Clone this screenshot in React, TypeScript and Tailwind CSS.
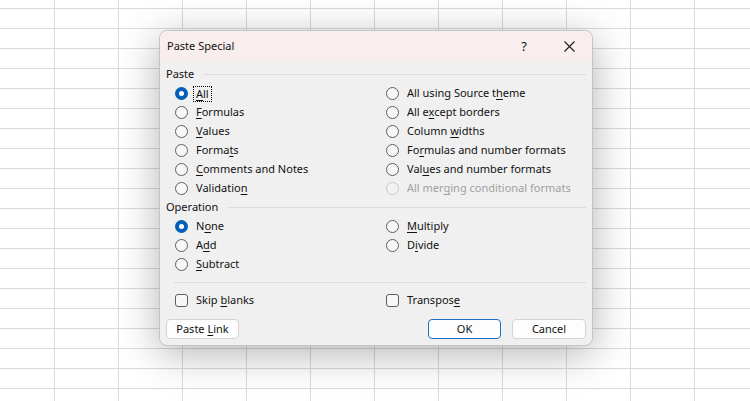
import React from "react";

type Parts = [string, string, string];

function Label({ p, focus }: { p: Parts; focus?: boolean }) {
  const inner = (
    <>
      {p[0]}
      <span className="underline underline-offset-[2px] decoration-[1px]">{p[1]}</span>
      {p[2]}
    </>
  );
  if (focus) {
    return (
      <span className="-ml-[3px] border border-dotted border-black px-[2px] leading-[14px]">{inner}</span>
    );
  }
  return <span>{inner}</span>;
}

function Radio({ p, checked, disabled, focus }: { p: Parts; checked?: boolean; disabled?: boolean; focus?: boolean }) {
  return (
    <div className={"flex h-[19px] items-center gap-2 " + (disabled ? "text-[#a0a0a0]" : "text-[#111111]")}>
      {checked ? (
        <span className="flex h-[13px] w-[13px] shrink-0 items-center justify-center rounded-full bg-[#005fb8]">
          <span className="h-[5px] w-[5px] rounded-full bg-white" />
        </span>
      ) : (
        <span
          className={
            "h-[13px] w-[13px] shrink-0 rounded-full border " +
            (disabled ? "border-[#c8c8c8] bg-[#f3f3f3]" : "border-[#5f5f5f] bg-[#f7f7f7]")
          }
        />
      )}
      <Label p={p} focus={focus} />
    </div>
  );
}

function Check({ p }: { p: Parts }) {
  return (
    <div className="flex h-[19px] items-center gap-2 text-[#111111]">
      <span className="h-[13px] w-[13px] shrink-0 rounded-[3px] border border-[#5f5f5f] bg-[#f7f7f7]" />
      <Label p={p} />
    </div>
  );
}

function Header({ title, lineMl }: { title: string; lineMl: string }) {
  return (
    <div className="flex h-[19px] items-center text-[#111111]">
      <span>{title}</span>
      <span className={"h-px flex-1 bg-[#dcdcdc] " + lineMl} />
    </div>
  );
}

function Btn({ p, w, primary }: { p: Parts; w: string; primary?: boolean }) {
  return (
    <div
      className={
        "flex h-[20px] items-center justify-center rounded-[4px] border bg-[#fdfdfd] text-[#111111] " +
        w +
        " " +
        (primary ? "border-[#1f6fc0]" : "border-[#d3d3d3]")
      }
    >
      <Label p={p} />
    </div>
  );
}

export default function App() {
  return (
    <div className="h-[401px] w-[750px] overflow-hidden bg-white bg-[linear-gradient(to_right,#dadada_1px,transparent_1px),linear-gradient(to_bottom,#dadada_1px,transparent_1px)] bg-[size:64px_20px] bg-[position:54px_8px] pl-[159px] pt-[30px] font-['Noto_Sans',sans-serif] text-[11px]">
      <div className="flex h-[316px] w-[434px] flex-col overflow-hidden rounded-[8px] border border-[#c4c4c4] bg-[#f0f0f0] shadow-[0_8px_40px_rgba(0,0,0,0.3)]">
        {/* Title bar */}
        <div className="flex h-[30px] shrink-0 items-center bg-[#f9eeee] pl-[7px] pr-[17px] text-[#111111]">
          <span className="flex-1 pt-[1px]">Paste Special</span>
          <span className="mr-[37px] text-[13px] leading-none">?</span>
          <svg width="11" height="11" viewBox="0 0 11 11" className="mt-[1px]">
            <path d="M0.5 0.5 L10.5 10.5 M10.5 0.5 L0.5 10.5" stroke="#1b1b1b" strokeWidth="1.1" fill="none" />
          </svg>
        </div>
        {/* Body */}
        <div className="flex flex-1 flex-col px-[6px] pt-[4px]">
          <Header title="Paste" lineMl="ml-[9px]" />
          <div className="grid grid-cols-[211px_1fr] pl-[9px]">
            <div className="flex flex-col">
              <Radio p={["", "A", "ll"]} checked focus />
              <Radio p={["", "F", "ormulas"]} />
              <Radio p={["", "V", "alues"]} />
              <Radio p={["Forma", "t", "s"]} />
              <Radio p={["", "C", "omments and Notes"]} />
              <Radio p={["Validatio", "n", ""]} />
            </div>
            <div className="flex flex-col">
              <Radio p={["All using Source t", "h", "eme"]} />
              <Radio p={["All e", "x", "cept borders"]} />
              <Radio p={["Column ", "w", "idths"]} />
              <Radio p={["Fo", "r", "mulas and number formats"]} />
              <Radio p={["Val", "u", "es and number formats"]} />
              <Radio p={["All mer", "g", "ing conditional formats"]} disabled />
            </div>
          </div>
          <Header title="Operation" lineMl="ml-[10px]" />
          <div className="grid grid-cols-[211px_1fr] pl-[9px]">
            <div className="flex flex-col">
              <Radio p={["N", "o", "ne"]} checked />
              <Radio p={["A", "d", "d"]} />
              <Radio p={["", "S", "ubtract"]} />
            </div>
            <div className="flex flex-col">
              <Radio p={["", "M", "ultiply"]} />
              <Radio p={["D", "i", "vide"]} />
            </div>
          </div>
          <div className="ml-[8px] mt-[8px] h-px bg-[#dcdcdc]" />
          <div className="mt-[8px] grid grid-cols-[211px_1fr] pl-[9px]">
            <Check p={["Skip ", "b", "lanks"]} />
            <Check p={["Transpos", "e", ""]} />
          </div>
          <div className="mt-[9px] flex items-center">
            <Btn p={["Paste ", "L", "ink"]} w="w-[73px]" />
            <div className="flex-1" />
            <Btn p={["OK", "", ""]} w="w-[73px]" primary />
            <div className="w-[11px]" />
            <Btn p={["Cancel", "", ""]} w="w-[74px]" />
          </div>
        </div>
      </div>
    </div>
  );
}
